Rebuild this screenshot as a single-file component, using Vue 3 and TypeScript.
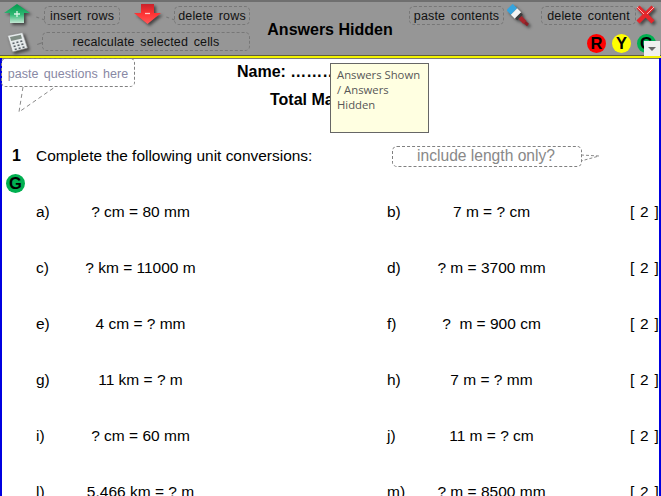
<script setup lang="ts">
interface Cell { label: string; expr: string }
const rows: [Cell, Cell][] = [
  [{ label: 'a)', expr: '? cm = 80 mm' }, { label: 'b)', expr: '7 m = ? cm' }],
  [{ label: 'c)', expr: '? km = 11000 m' }, { label: 'd)', expr: '? m = 3700 mm' }],
  [{ label: 'e)', expr: '4 cm = ? mm' }, { label: 'f)', expr: '?  m = 900 cm' }],
  [{ label: 'g)', expr: '11 km = ? m' }, { label: 'h)', expr: '7 m = ? mm' }],
  [{ label: 'i)', expr: '? cm = 60 mm' }, { label: 'j)', expr: '11 m = ? cm' }],
  [{ label: 'l)', expr: '5.466 km = ? m' }, { label: 'm)', expr: '? m = 8500 mm' }],
]
</script>

<template>
  <div class="screen">
    <header class="toolbar">
      <div class="tools-left">
        <div class="tool-row first">
          <svg class="ico" width="30" height="24" viewBox="0 0 30 24">
            <defs>
              <linearGradient id="gUp" x1="0" y1="0" x2="0" y2="1"><stop offset="0" stop-color="#009a4c" /><stop offset=".55" stop-color="#2fb873" /><stop offset="1" stop-color="#c4e8d4" /></linearGradient>
            </defs>
            <path d="M13 0 L26 9 L20 9 L20 19 L6 19 L6 9 L0 9 Z" fill="url(#gUp)" />
            <path d="M13 7v6M10 10h6" stroke="#d8f3e4" stroke-width="1.3" />
          </svg>
          <span class="callout w76 tail-left">insert rows</span>
          <svg class="ico red" width="30" height="24" viewBox="0 0 30 24">
            <defs>
              <linearGradient id="gDn" x1="0" y1="0" x2="0" y2="1"><stop offset="0" stop-color="#c9222a" /><stop offset=".5" stop-color="#ff3434" /><stop offset="1" stop-color="#ff5858" /></linearGradient>
            </defs>
            <path d="M7 0 L20 0 L20 9 L27 9 L13.5 20 L0 9 L7 9 Z" fill="url(#gDn)" />
            <path d="M11 9.5h5" stroke="#ffc8c8" stroke-width="1.3" />
          </svg>
          <span class="callout w76 tail-left">delete rows</span>
        </div>
        <div class="tool-row second">
          <svg class="ico" width="22" height="22" viewBox="0 0 22 22">
            <path d="M0.5 3.5 L15.5 0.5 L20.5 16 L5.5 20 Z" fill="#e6ebec" stroke="#8a8a8a" stroke-width=".7" />
            <path d="M3 5 L13.8 2.8 L15 6.5 L4.2 9 Z" fill="#7f8d84" />
            <path d="M5.5 11.5l2-.5M9.4 10.5l2-.5M13.3 9.5l2-.5M6.6 14.5l2-.5M10.5 13.5l2-.5M14.4 12.5l2-.5M7.7 17.5l2-.5M11.6 16.5l2-.5M15.5 15.5l2-.5" stroke="#5a6268" stroke-width="1.7" />
          </svg>
          <span class="callout wide tail-small">recalculate selected cells</span>
        </div>
      </div>
      <h1 class="title">Answers Hidden</h1>
      <div class="tools-right">
        <div class="tool-row first">
          <span class="callout w95">paste contents</span>
          <svg class="ico brush" width="24" height="24" viewBox="0 0 24 24">
            <path d="M2.5 3 L7 7.5" stroke="#35a4de" stroke-width="9" />
            <path d="M7 7.5 L11 11.5" stroke="#f2f2f2" stroke-width="9" />
            <path d="M11 11.5 L13 13.5" stroke="#3c3c3c" stroke-width="8" />
            <path d="M13 13.5 L18 18.5" stroke="#a8262c" stroke-width="4.5" />
            <path d="M18 18.5 L21 21" stroke="#8e1f26" stroke-width="3" />
          </svg>
          <span class="callout w95 gap-content">delete content</span>
          <svg class="ico cross" width="22" height="22" viewBox="0 0 22 22">
            <path d="M3 3 L18 18 M18 3 L3 18" stroke="#e5262b" stroke-width="4.4" />
            <path d="M2 3 L9 10 M19 3 L12 10" stroke="#f9b4b4" stroke-width="1" />
          </svg>
        </div>
        <div class="tool-row dots">
          <span class="dot r">R</span>
          <span class="dot y">Y</span>
          <span class="dot g">G</span>
        </div>
      </div>
      <span class="dropdown"><i class="caret"></i></span>
    </header>

    <main class="sheet">
      <div class="name-line">Name: ……………</div>
      <div class="marks-line">Total Marks: 24</div>

      <div class="question">
        <span class="qnum">1</span>
        <span class="qtext">Complete the following unit conversions:</span>
        <span class="callout grey include">
          include length only?
          <svg class="include-tail" width="18" height="9" viewBox="0 0 18 9">
            <path d="M0 1 L18 2 L0 7" fill="none" stroke="#8a8a8a" stroke-width="1" stroke-dasharray="3 2" />
          </svg>
        </span>
      </div>
      <div class="level"><span class="dot g">G</span></div>

      <div class="grid">
        <div v-for="row in rows" :key="row[0].label" class="row">
          <span class="lab">{{ row[0].label }}</span>
          <span class="expr">{{ row[0].expr }}</span>
          <span class="lab lab-2">{{ row[1].label }}</span>
          <span class="expr expr-2">{{ row[1].expr }}</span>
          <span class="mark">[ 2 ]</span>
        </div>
      </div>

      <div class="paste-note">
        paste questions here
        <svg class="paste-tail" width="42" height="28" viewBox="0 0 42 28">
          <path d="M5 2 L1 27 L37 2" fill="none" stroke="#8a8a8a" stroke-width="1" stroke-dasharray="4 3" />
        </svg>
      </div>

      <div class="tooltip">Answers Shown / Answers Hidden</div>
    </main>
  </div>
</template>

<style scoped>
.screen {
  width: 661px;
  height: 496px;
  overflow: hidden;
  position: relative;
  font-family: "Liberation Sans", Arial, sans-serif;
  background: #fff;
}
.toolbar {
  height: 58px;
  box-sizing: border-box;
  background: #969696;
  border-top: 2px solid #6f6f6f;
  border-bottom: 2px solid #f4f400;
  box-shadow: inset 0 -1px 0 #5f5f3a, 0 1px 0 #777;
  display: flex;
  position: relative;
}
.tools-left { width: 252px; flex: none; padding-left: 4px; box-sizing: border-box; }
.tool-row { display: flex; align-items: flex-start; }
.tool-row.first { height: 21px; padding-top: 3px; }
.tool-row.second { margin-top: 6px; padding-left: 3px; }
.ico { flex: none; display: block; filter: drop-shadow(2px 2px 1.5px #444); }
.tool-row.first .ico { margin-top: -1px; }
.callout {
  position: relative;
  box-sizing: border-box;
  height: 19px;
  line-height: 19px;
  border: 1px dashed #777;
  border-radius: 5px;
  text-align: center;
  font-size: 12.5px;
  letter-spacing: .15px;
  word-spacing: 2px;
  color: #111;
  white-space: nowrap;
  flex: none;
}
.tool-row.first .callout { margin-top: 1px; }
.w76 { width: 76px; margin-left: 10px; }
.red { margin-left: 14px; }
.w95 { width: 95px; }
.gap-content { margin-left: 10px; }
.wide { width: 208px; margin-left: 13px; }
.tail-left::after {
  content: "";
  position: absolute;
  left: -9px;
  top: 11px;
  width: 9px;
  border-top: 1px dashed #777;
  transform: rotate(20deg);
}
.tail-small::after {
  content: "";
  position: absolute;
  left: -6px;
  top: 10px;
  width: 6px;
  border-top: 1px dashed #777;
  transform: rotate(-20deg);
}
.title {
  margin: 0;
  width: 152px;
  flex: none;
  padding-top: 19px;
  padding-left: 4px;
  box-sizing: border-box;
  text-align: center;
  font-size: 16px;
  line-height: 18px;
  color: #000;
  font-weight: 700;
  white-space: nowrap;
}
.tools-right { padding-left: 5px; flex: 1; }
.brush { margin-left: 3px; }
.cross { margin-left: -1px; }
.tool-row.dots { gap: 6px; padding-left: 178px; margin-top: 8px; }
.dot {
  width: 19px;
  height: 19px;
  border-radius: 50%;
  display: inline-flex;
  align-items: center;
  justify-content: center;
  font-weight: 700;
  font-size: 16.5px;
  color: #000;
  flex: none;
}
.dot.r { background: #f00; }
.dot.y { background: #ff0; }
.dot.g { background: #00b050; }
.dropdown {
  position: absolute;
  right: 1px;
  bottom: 0;
  width: 16px;
  height: 15px;
  background: #f0f0f0;
  display: flex;
  align-items: center;
  justify-content: center;
}
.caret { width: 0; height: 0; border: 4px solid transparent; border-top: 4px solid #666; margin-top: 4px; }

.sheet {
  position: relative;
  height: 438px;
  box-sizing: border-box;
  border-left: 2px solid #0000e0;
  border-right: 2px solid #0000e0;
  color: #000;
}
.name-line {
  font-weight: 700;
  font-size: 16px;
  line-height: 18px;
  padding: 5px 0 0 235px;
  white-space: nowrap;
}
.marks-line {
  font-weight: 700;
  font-size: 16px;
  line-height: 18px;
  padding: 10px 0 0 268px;
}
.question {
  display: flex;
  align-items: center;
  margin-top: 37px;
  height: 20px;
}
.qnum { width: 34px; padding-left: 10px; box-sizing: border-box; font-weight: 700; font-size: 16px; flex: none; }
.qtext { font-size: 15.45px; width: 356px; flex: none; white-space: nowrap; }
.callout.grey { color: #888; }
.include {
  width: 190px;
  height: 21px;
  line-height: 18px;
  font-size: 15.6px;
  letter-spacing: 0;
  word-spacing: 0;
  padding-right: 2px;
  border-color: #808080;
}
.include-tail { position: absolute; left: 100%; top: 7px; }
.level { padding-left: 4px; margin-top: 8px; height: 19px; }
.grid { margin-top: 10px; }
.row {
  display: grid;
  grid-template-columns: 45px 119px 187px 36px 137px 70px 30px;
  height: 56px;
  padding-left: 34px;
  font-size: 15.5px;
  line-height: 17px;
  white-space: pre;
}
.expr { text-align: center; }
.lab-2 { grid-column: 4; }
.expr-2 { grid-column: 5; }
.mark { grid-column: 7; word-spacing: 1.5px; }
.paste-note {
  position: absolute;
  left: -1px;
  top: 0;
  width: 134px;
  height: 29px;
  box-sizing: border-box;
  border: 1px dashed #808080;
  border-radius: 5px;
  font-size: 12.5px;
  line-height: 30px;
  letter-spacing: .05px;
  word-spacing: 1.7px;
  color: #8888a4;
  text-align: center;
  white-space: nowrap;
}
.paste-tail { position: absolute; left: 16px; top: 26px; }
.tooltip {
  position: absolute;
  left: 328px;
  top: 5px;
  width: 99px;
  height: 70px;
  box-sizing: border-box;
  background: #ffffe1;
  border: 1px solid #666;
  padding: 3px 6px;
  font-family: "Open Sans", sans-serif;
  font-size: 11.3px;
  line-height: 15px;
  color: #575757;
}
</style>
